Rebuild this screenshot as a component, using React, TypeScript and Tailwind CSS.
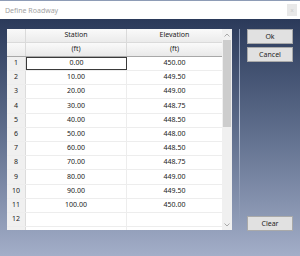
import React from 'react';

const data: [string, string][] = [
  ['0.00', '450.00'],
  ['10.00', '449.50'],
  ['20.00', '449.00'],
  ['30.00', '448.75'],
  ['40.00', '448.50'],
  ['50.00', '448.00'],
  ['60.00', '448.50'],
  ['70.00', '448.75'],
  ['80.00', '449.00'],
  ['90.00', '449.50'],
  ['100.00', '450.00'],
  ['', ''],
];

// row heights add up slightly over 14px each, as in the original dialog
const rowH = ['h-[14px]', 'h-[14px]', 'h-[14px]', 'h-[15px]', 'h-[14px]', 'h-[14px]', 'h-[14px]', 'h-[14px]', 'h-[15px]', 'h-[14px]', 'h-[14px]', 'h-[14px]', 'h-[14px]'];

const Chevron = ({ up }: { up?: boolean }) => (
  <svg width="6" height="4" viewBox="0 0 6 4" className="text-[#a0a0a0]">
    <path d={up ? 'M0.5 3.5 L3 1 L5.5 3.5' : 'M0.5 0.5 L3 3 L5.5 0.5'} fill="none" stroke="currentColor" strokeWidth="0.9" />
  </svg>
);

const Button = ({ label, className = '' }: { label: string; className?: string }) => (
  <button className={`h-[15px] w-[46px] bg-[#e1e1e1] border border-[#a9a9a9] text-[7px] text-[#1f1f1f] leading-none flex items-center justify-center ${className}`}>
    {label}
  </button>
);

export default function App() {
  return (
    <div className="w-[300px] h-[256px] flex flex-col overflow-hidden antialiased" style={{ fontFamily: '"Noto Sans", "Liberation Sans", sans-serif' }}>
      {/* title bar */}
      <div className="h-[19px] bg-white border-t border-[#8e9cb6] flex items-center justify-between pl-[5px] pr-[3px]">
        <span className="text-[7px] text-[#a3a3a3] leading-none">Define Roadway</span>
        <div className="w-[10px] h-[12px] bg-[#e8e8e8] flex items-center justify-center text-[6px] text-[#c9c9c9] leading-none">x</div>
      </div>

      {/* dialog body */}
      <div className="flex-1 bg-gradient-to-b from-[#2b3a5a] via-[#62718f] to-[#a3aec8] flex pt-[10px] pl-[7px] pr-[7px]">
        {/* grid */}
        <div className="w-[225px] h-[201px] bg-white flex overflow-hidden">
          <div className="w-[215px] flex flex-col">
            {/* header row 1 */}
            <div className="flex h-[14px] shrink-0">
              <div className="w-[19px] bg-gradient-to-b from-[#f9f9f9] to-[#ececec] border-r border-b border-[#dadada]" />
              <div className="w-[101px] bg-gradient-to-b from-[#fafafa] to-[#ebebeb] border-r border-b border-[#dadada] flex items-center justify-center text-[7px] text-[#222]">Station</div>
              <div className="w-[95px] bg-gradient-to-b from-[#fafafa] to-[#ebebeb] border-b border-[#dadada] flex items-center justify-center text-[7px] text-[#222]">Elevation</div>
            </div>
            {/* header row 2 */}
            <div className="flex h-[14px] shrink-0 border-b border-[#a8a8a8]">
              <div className="w-[19px] bg-gradient-to-b from-[#f9f9f9] to-[#ececec] border-r border-[#dadada]" />
              <div className="w-[101px] bg-gradient-to-b from-[#fafafa] to-[#e9e9e9] border-r border-[#dadada] flex items-center justify-center text-[7px] text-[#222]">(ft)</div>
              <div className="w-[95px] bg-gradient-to-b from-[#fafafa] to-[#e9e9e9] flex items-center justify-center text-[7px] text-[#222]">(ft)</div>
            </div>
            {/* data rows */}
            {[...data, ['', '']].map(([st, el], i) => (
              <div key={i} className={`flex ${rowH[i]} shrink-0 border-b border-[#ededed]`}>
                <div className="w-[19px] bg-[#f0f0f0] border-r border-[#dcdcdc] flex items-center justify-center text-[7px] text-[#222]">
                  {i < 12 ? i + 1 : ''}
                </div>
                <div className={`w-[101px] flex items-center justify-center text-[7px] text-[#222] ${i === 0 ? 'border border-[#3a3a3a]' : 'border-r border-[#ededed]'}`}>
                  {st}
                </div>
                <div className="w-[95px] flex items-center justify-center text-[7px] text-[#222]">{el}</div>
              </div>
            ))}
          </div>
          {/* vertical scrollbar */}
          <div className="w-[10px] bg-[#f0f0f0] flex flex-col items-center">
            <div className="h-[11px] flex items-center justify-center shrink-0">
              <Chevron up />
            </div>
            <div className="w-[8px] h-[87px] bg-[#cdcdcd] shrink-0" />
            <div className="flex-1" />
            <div className="h-[11px] flex items-center justify-center shrink-0">
              <Chevron />
            </div>
          </div>
        </div>

        {/* separator */}
        <div className="ml-[7px] w-px h-[193px] bg-gradient-to-b from-[#8190ad] via-[#b9c3d6] to-transparent" />

        {/* buttons */}
        <div className="ml-[7px] flex flex-col h-[202px]">
          <Button label="Ok" />
          <Button label="Cancel" className="mt-[3px]" />
          <Button label="Clear" className="mt-auto" />
        </div>
      </div>
    </div>
  );
}
